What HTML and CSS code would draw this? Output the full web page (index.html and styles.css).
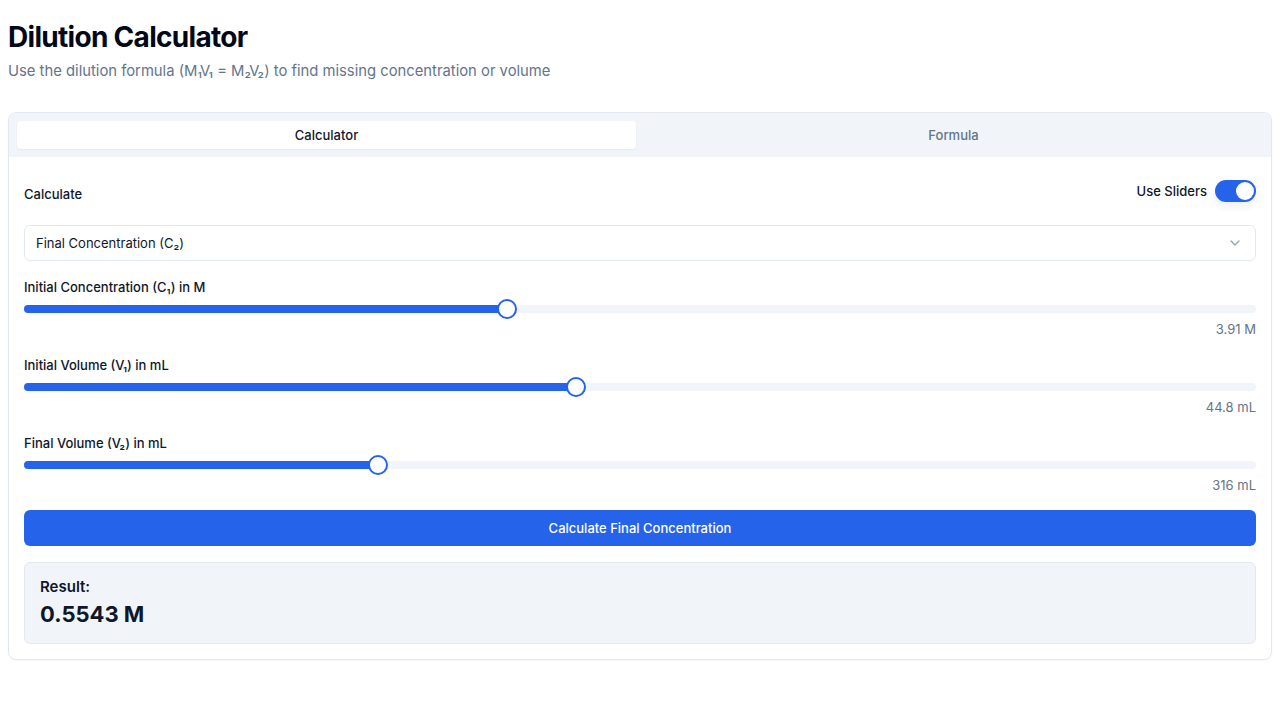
FILE: index.html
```html
<!DOCTYPE html>
<html lang="en">
<head>
    <meta charset="UTF-8">
    <meta name="viewport" content="width=device-width, initial-scale=1.0">
    <title>Dilution Calculator</title>
    <link rel="stylesheet" href="styles.css">
</head>
<body>
    <div class="page">
        <h1 class="title">Dilution Calculator</h1>
        <p class="subtitle">Use the dilution formula (M₁V₁ = M₂V₂) to find missing concentration or volume</p>

        <div class="card">
            <div class="tabs">
                <div class="tab active">Calculator</div>
                <div class="tab">Formula</div>
            </div>

            <div class="content">
                <div class="calc-row">
                    <span class="label calc-label">Calculate</span>
                    <div class="toggle-group">
                        <span class="label">Use Sliders</span>
                        <div class="switch"><div class="switch-thumb"></div></div>
                    </div>
                </div>

                <div class="select">
                    <span>Final Concentration (C₂)</span>
                    <svg class="chevron" width="16" height="16" viewBox="0 0 24 24" fill="none" stroke="currentColor" stroke-width="2" stroke-linecap="round" stroke-linejoin="round"><path d="m6 9 6 6 6-6"/></svg>
                </div>

                <div class="field">
                    <div class="label">Initial Concentration (C₁) in M</div>
                    <div class="slider">
                        <div class="track"><div class="fill" style="width: 39.2%"></div></div>
                        <div class="thumb" style="left: 39.2%"></div>
                    </div>
                    <div class="value">3.91 M</div>
                </div>

                <div class="field">
                    <div class="label">Initial Volume (V₁) in mL</div>
                    <div class="slider">
                        <div class="track"><div class="fill" style="width: 44.8%"></div></div>
                        <div class="thumb" style="left: 44.8%"></div>
                    </div>
                    <div class="value">44.8 mL</div>
                </div>

                <div class="field">
                    <div class="label">Final Volume (V₂) in mL</div>
                    <div class="slider">
                        <div class="track"><div class="fill" style="width: 28.7%"></div></div>
                        <div class="thumb" style="left: 28.7%"></div>
                    </div>
                    <div class="value">316 mL</div>
                </div>

                <button class="calc-button">Calculate Final Concentration</button>

                <div class="result">
                    <div class="result-label">Result:</div>
                    <div class="result-value">0.5543 M</div>
                </div>
            </div>
        </div>
    </div>
</body>
</html>
```

FILE: styles.css
```css
body {
    margin: 0;
    font-family: Inter, "Noto Sans", sans-serif;
    color: #0f172a;
    background: #fff;
}
.page {
    padding: 19px 8px;
}
.title {
    margin: 0;
    font-size: 28px;
    line-height: 36px;
    font-weight: 700;
    letter-spacing: -0.025em;
    color: #020817;
}
.subtitle {
    margin: 4px 0 0;
    font-size: 14.8px;
    line-height: 24px;
    color: #64748b;
}
.card {
    margin-top: 29px;
    border: 1px solid #e2e8f0;
    border-radius: 8px;
    box-shadow: 0 1px 2px rgba(0, 0, 0, 0.04);
    overflow: hidden;
}
.tabs {
    display: grid;
    grid-template-columns: 1fr 1fr;
    gap: 8px;
    padding: 8px;
    background: #f1f5f9;
}
.tab {
    height: 28px;
    line-height: 29px;
    text-align: center;
    font-size: 13px;
    font-weight: 500;
    color: #64748b;
    border-radius: 4px;
}
.tab.active {
    background: #fff;
    color: #0f172a;
    box-shadow: 0 1px 2px rgba(0, 0, 0, 0.05);
}
.content {
    padding: 23px 15px 15px;
}
.label {
    font-size: 13px;
    line-height: 20px;
    font-weight: 500;
    color: #0f172a;
}
.calc-row {
    display: flex;
    justify-content: space-between;
    height: 24px;
}
.calc-label {
    align-self: flex-end;
}
.toggle-group {
    align-self: flex-start;
    display: flex;
    align-items: center;
    gap: 8px;
}
.switch {
    width: 41px;
    height: 22px;
    border-radius: 11px;
    background: #2563eb;
    display: flex;
    align-items: center;
    justify-content: flex-end;
    padding: 0 2px;
    box-sizing: border-box;
    box-shadow: 0 4px 8px rgba(15, 23, 42, 0.08);
}
.switch-thumb {
    width: 18px;
    height: 18px;
    border-radius: 50%;
    background: #fff;
}
.select {
    margin-top: 21px;
    box-sizing: border-box;
    height: 36px;
    border: 1px solid #e2e8f0;
    border-radius: 6px;
    display: flex;
    align-items: center;
    justify-content: space-between;
    padding: 0 12px 0 11px;
    font-size: 13px;
}
.chevron {
    color: #94a3b8;
}
.field {
    margin-top: 16px;
}
.slider {
    position: relative;
    height: 20px;
    margin-top: 2px;
    display: flex;
    align-items: center;
}
.track {
    width: 100%;
    height: 8px;
    border-radius: 4px;
    background: #f1f5f9;
    overflow: hidden;
}
.fill {
    height: 100%;
    background: #2563eb;
}
.thumb {
    position: absolute;
    top: 0;
    width: 20px;
    height: 20px;
    margin-left: -10px;
    border-radius: 50%;
    border: 2px solid #2563eb;
    background: #fff;
    box-sizing: border-box;
}
.value {
    text-align: right;
    font-size: 13px;
    line-height: 20px;
    color: #64748b;
}
.calc-button {
    display: block;
    width: 100%;
    margin-top: 15px;
    height: 36px;
    border: none;
    border-radius: 6px;
    background: #2563eb;
    color: #fff;
    font-family: inherit;
    font-size: 13px;
    font-weight: 500;
    cursor: pointer;
}
.result {
    margin-top: 16px;
    background: #f1f5f9;
    border: 1px solid #e2e8f0;
    border-radius: 6px;
    padding: 14px 15px 13px;
}
.result-label {
    font-size: 15px;
    line-height: 20px;
    font-weight: 600;
}
.result-value {
    margin-top: 1px;
    font-size: 22px;
    line-height: 32px;
    font-weight: 700;
}
```
